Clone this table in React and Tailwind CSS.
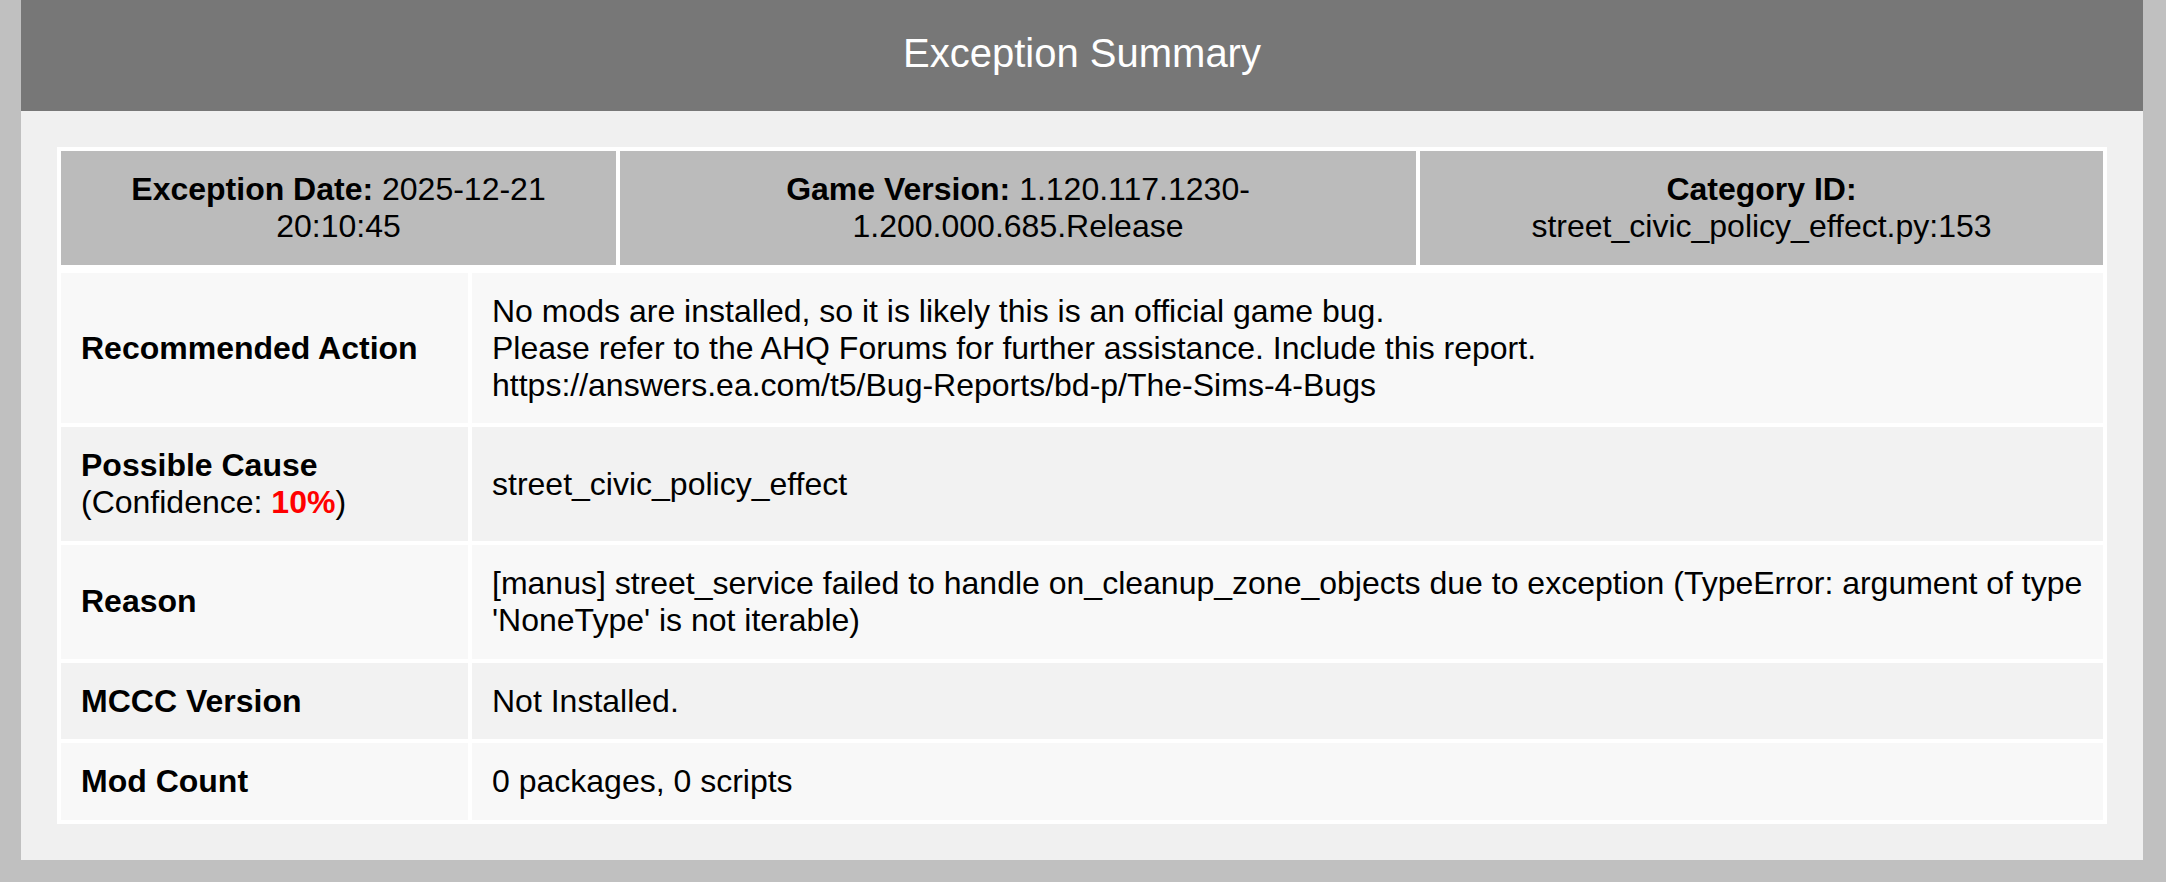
import React from "react";

const headerCells = [
  { label: "Exception Date:", lines: ["2025-12-21", "20:10:45"], split: "space" },
  { label: "Game Version:", lines: ["1.120.117.1230-", "1.200.000.685.Release"], split: "space" },
  { label: "Category ID:", lines: ["", "street_civic_policy_effect.py:153"], split: "break" },
];

const rows = [
  {
    label: <span className="font-bold">Recommended Action</span>,
    value: [
      "No mods are installed, so it is likely this is an official game bug.",
      "Please refer to the AHQ Forums for further assistance. Include this report.",
      "https://answers.ea.com/t5/Bug-Reports/bd-p/The-Sims-4-Bugs",
    ],
    bg: "bg-[#f8f8f8]",
  },
  {
    label: (
      <>
        <span className="block font-bold">Possible Cause</span>
        <span className="block">
          (Confidence: <span className="font-bold text-[#ff0000]">10%</span>)
        </span>
      </>
    ),
    value: ["street_civic_policy_effect"],
    bg: "bg-[#f2f2f2]",
  },
  {
    label: <span className="font-bold">Reason</span>,
    value: [
      "[manus] street_service failed to handle on_cleanup_zone_objects due to exception (TypeError: argument of type",
      "'NoneType' is not iterable)",
    ],
    bg: "bg-[#f8f8f8]",
  },
  {
    label: <span className="font-bold">MCCC Version</span>,
    value: ["Not Installed."],
    bg: "bg-[#f2f2f2]",
  },
  {
    label: <span className="font-bold">Mod Count</span>,
    value: ["0 packages, 0 scripts"],
    bg: "bg-[#f8f8f8]",
  },
];

export default function App() {
  return (
    <div
      className="h-[882px] overflow-hidden bg-[#c0c0c0] pl-[21px] pr-[23px] pb-[20px] text-black"
      style={{ fontFamily: '"Liberation Sans", Arial, Helvetica, sans-serif' }}
    >
      {/* Title bar */}
      <div className="h-[111px] bg-[#777777] flex items-center justify-center pb-[6px] text-white text-[40px] leading-[46px]">
        Exception Summary
      </div>

      {/* Summary table */}
      <div className="bg-[#f0f0f0] p-[36px]">
        <div className="bg-white p-1 text-[32px] leading-[36.8px]">
          <div className="grid grid-cols-[555px_796px_1fr] gap-1">
            {headerCells.map((c) => (
              <div key={c.label} className="bg-[#bbbbbb] h-[114px] px-5 py-5 text-center">
                {c.split === "break" ? (
                  <>
                    <span className="block font-bold">{c.label}</span>
                    <span className="block">{c.lines[1]}</span>
                  </>
                ) : (
                  <>
                    <span className="block whitespace-nowrap">
                      <span className="font-bold">{c.label}</span> {c.lines[0]}
                    </span>
                    <span className="block">{c.lines[1]}</span>
                  </>
                )}
              </div>
            ))}
          </div>

          <div className="mt-2 flex flex-col gap-1">
            {rows.map((r, i) => (
              <div key={i} className="grid grid-cols-[407px_1fr] gap-1">
                <div className={`${r.bg} px-5 py-5 flex flex-col justify-center`}>{r.label}</div>
                <div className={`${r.bg} px-5 py-5 flex flex-col justify-center`}>
                  {r.value.map((line, j) => (
                    <span key={j} className="block whitespace-nowrap">
                      {line}
                    </span>
                  ))}
                </div>
              </div>
            ))}
          </div>
        </div>
      </div>
    </div>
  );
}
